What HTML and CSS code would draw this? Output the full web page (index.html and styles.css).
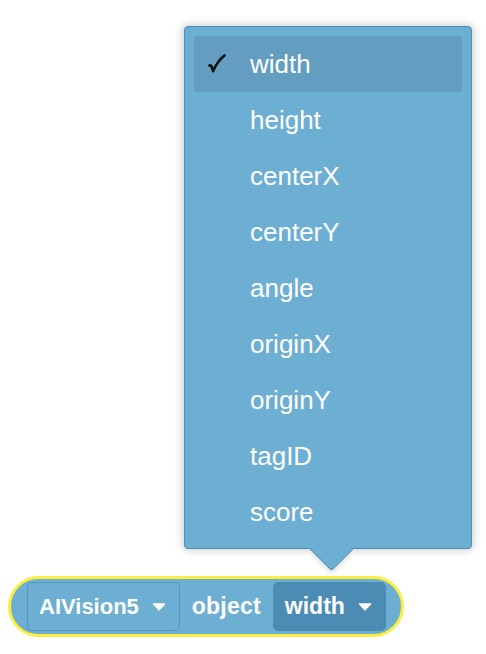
FILE: index.html
```html
<!DOCTYPE html>
<html lang="en">

<head>
    <meta charset="UTF-8">
    <meta name="viewport" content="width=device-width, initial-scale=1.0">
    <title>AIVision5 object</title>
    <link rel="stylesheet" href="styles.css">
</head>

<body>
    <div class="menu">
        <div class="menu-item selected">
            <svg class="check" width="18" height="19" viewBox="0 0 18 19">
                <path d="M1.5 11.5 C3.2 10.8 4.2 13 5 17.2 C8 10.5 12 5 16.5 1.5" fill="none" stroke="#111" stroke-width="2.6" stroke-linecap="round" stroke-linejoin="round" />
            </svg>
            <span>width</span>
        </div>
        <div class="menu-item"><span>height</span></div>
        <div class="menu-item"><span>centerX</span></div>
        <div class="menu-item"><span>centerY</span></div>
        <div class="menu-item"><span>angle</span></div>
        <div class="menu-item"><span>originX</span></div>
        <div class="menu-item"><span>originY</span></div>
        <div class="menu-item"><span>tagID</span></div>
        <div class="menu-item"><span>score</span></div>
    </div>

    <div class="block">
        <div class="field">
            AIVision5
            <svg class="caret" width="14" height="8" viewBox="0 0 14 8">
                <path d="M1.5 1 L12.5 1 L7 6.8 Z" fill="#fff" stroke="#fff" stroke-width="1.6" stroke-linejoin="round" />
            </svg>
        </div>
        <div class="label">object</div>
        <div class="field active">
            width
            <svg class="caret" width="14" height="8" viewBox="0 0 14 8">
                <path d="M1.5 1 L12.5 1 L7 6.8 Z" fill="#fff" stroke="#fff" stroke-width="1.6" stroke-linejoin="round" />
            </svg>
        </div>
    </div>
</body>

</html>
```

FILE: styles.css
```css
body {
    margin: 0;
    background-color: #ffffff;
    font-family: "Liberation Sans", Arial, Helvetica, sans-serif;
}

.menu {
    position: relative;
    box-sizing: border-box;
    width: 288px;
    margin: 26px 0 0 184px;
    padding: 9px 9px 8px 9px;
    background-color: #6daed3;
    border: 1px solid #4f8db6;
    border-radius: 4px;
    box-shadow: 0 0 9px 1px rgba(0, 0, 0, 0.22);
}

/* хвостик меню, указывает на поле width */
.menu::after {
    content: "";
    position: absolute;
    left: 131px;
    top: calc(100% - 14px);
    width: 30px;
    height: 30px;
    background-color: #6daed3;
    border-right: 1px solid #4f8db6;
    border-bottom: 1px solid #4f8db6;
    border-bottom-right-radius: 4px;
    transform: rotate(45deg);
    box-shadow: 3px 3px 5px -2px rgba(0, 0, 0, 0.18);
}

.menu-item {
    display: flex;
    align-items: center;
    height: 56px;
    padding-left: 56px;
    position: relative;
    color: #ffffff;
    font-size: 26px;
}

.menu-item.selected {
    background-color: #639dbf;
}

.check {
    position: absolute;
    left: 14px;
    top: 18px;
}

.block {
    display: inline-flex;
    align-items: center;
    gap: 12px;
    box-sizing: border-box;
    width: 396px;
    height: 61px;
    margin: 27px 0 0 8px;
    padding: 0 15px 0 16px;
    background-color: #6daed3;
    border: 3px solid #fbee3e;
    border-radius: 31px;
    color: #ffffff;
    font-size: 22px;
    font-weight: bold;
}

.field {
    display: flex;
    align-items: center;
    gap: 13px;
    box-sizing: border-box;
    height: 49px;
    padding: 0 13px 0 11px;
    border: 1px solid #5793bb;
    border-radius: 5px;
}

.field.active {
    margin-left: -1px;
    background-color: #4b8bb4;
    border-color: #4b8bb4;
    font-size: 23px;
}

.label {
    margin-right: 1px;
    font-size: 23px;
    letter-spacing: 0.2px;
}

.caret {
    margin-top: 1px;
}
```
